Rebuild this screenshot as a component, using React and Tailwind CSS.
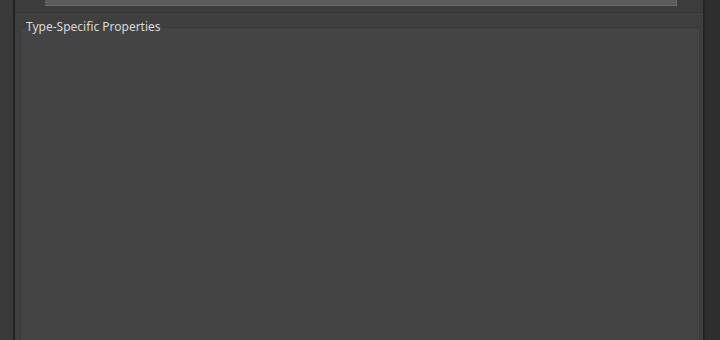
export default function App() {
  return (
    <div className="w-[720px] h-[340px] bg-[#2e2e2e] flex overflow-hidden" style={{ fontFamily: '"Noto Sans", "Open Sans", sans-serif' }}>
      <div className="w-[13px] bg-[#3a3a3a]" />
      <div className="w-[2px] bg-[#232323]" />
      <div className="flex-1 flex flex-col bg-[#444444]">
        <div className="h-[13px] bg-[#3c3c3c] border-b border-[#353535] pl-[30px] pr-[26px]">
          <div className="h-[6px] bg-[#5b5b5b] border-b border-[#6b6b6b] border-r border-r-[#6b6b6b]" />
        </div>
        <div className="flex-1 flex pl-[5px] pr-[3px] bg-[#3f3f3f]">
          <fieldset className="flex-1 bg-[#444444] border-t border-l border-r border-[#383838] mt-[6px] pl-[4px]">
            <legend className="px-[1px] text-[12px] leading-[16px] text-[#d8d8d8]">Type-Specific Properties</legend>
          </fieldset>
        </div>
      </div>
      <div className="w-[2px] bg-[#232323]" />
      <div className="w-[15px] bg-[#2e2e2e]" />
    </div>
  );
}
